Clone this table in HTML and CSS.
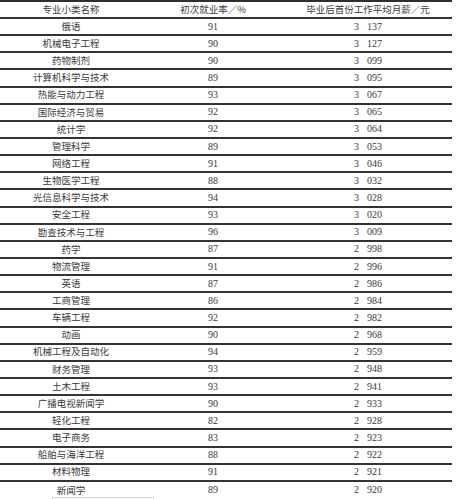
FILE: index.html
```html
<!DOCTYPE html>
<html lang="zh">
<head>
<meta charset="utf-8">
<link rel="stylesheet" href="styles.css">
</head>
<body>
<div class="page">
  <div class="table">
    <div class="row head"><span>专业小类名称</span><span>初次就业率／%</span><span>毕业后首份工作平均月薪／元</span></div>
    <div class="row"><span>俄语</span><span class="num">91</span><span class="num">3<i></i>137</span></div>
    <div class="row"><span>机械电子工程</span><span class="num">90</span><span class="num">3<i></i>127</span></div>
    <div class="row"><span>药物制剂</span><span class="num">90</span><span class="num">3<i></i>099</span></div>
    <div class="row"><span>计算机科学与技术</span><span class="num">89</span><span class="num">3<i></i>095</span></div>
    <div class="row"><span>热能与动力工程</span><span class="num">93</span><span class="num">3<i></i>067</span></div>
    <div class="row"><span>国际经济与贸易</span><span class="num">92</span><span class="num">3<i></i>065</span></div>
    <div class="row"><span>统计学</span><span class="num">92</span><span class="num">3<i></i>064</span></div>
    <div class="row"><span>管理科学</span><span class="num">89</span><span class="num">3<i></i>053</span></div>
    <div class="row"><span>网络工程</span><span class="num">91</span><span class="num">3<i></i>046</span></div>
    <div class="row"><span>生物医学工程</span><span class="num">88</span><span class="num">3<i></i>032</span></div>
    <div class="row"><span>光信息科学与技术</span><span class="num">94</span><span class="num">3<i></i>028</span></div>
    <div class="row"><span>安全工程</span><span class="num">93</span><span class="num">3<i></i>020</span></div>
    <div class="row"><span>勘查技术与工程</span><span class="num">96</span><span class="num">3<i></i>009</span></div>
    <div class="row"><span>药学</span><span class="num">87</span><span class="num">2<i></i>998</span></div>
    <div class="row"><span>物流管理</span><span class="num">91</span><span class="num">2<i></i>996</span></div>
    <div class="row"><span>英语</span><span class="num">87</span><span class="num">2<i></i>986</span></div>
    <div class="row"><span>工商管理</span><span class="num">86</span><span class="num">2<i></i>984</span></div>
    <div class="row"><span>车辆工程</span><span class="num">92</span><span class="num">2<i></i>982</span></div>
    <div class="row"><span>动画</span><span class="num">90</span><span class="num">2<i></i>968</span></div>
    <div class="row"><span>机械工程及自动化</span><span class="num">94</span><span class="num">2<i></i>959</span></div>
    <div class="row"><span>财务管理</span><span class="num">93</span><span class="num">2<i></i>948</span></div>
    <div class="row"><span>土木工程</span><span class="num">93</span><span class="num">2<i></i>941</span></div>
    <div class="row"><span>广播电视新闻学</span><span class="num">90</span><span class="num">2<i></i>933</span></div>
    <div class="row"><span>轻化工程</span><span class="num">82</span><span class="num">2<i></i>928</span></div>
    <div class="row"><span>电子商务</span><span class="num">83</span><span class="num">2<i></i>923</span></div>
    <div class="row"><span>船舶与海洋工程</span><span class="num">88</span><span class="num">2<i></i>922</span></div>
    <div class="row"><span>材料物理</span><span class="num">91</span><span class="num">2<i></i>921</span></div>
    <div class="row last"><span>新闻学</span><span class="num">89</span><span class="num">2<i></i>920</span></div>
  </div>
  <div class="tip"></div>
</div>
</body>
</html>
```
FILE: styles.css
```css
html, body {
  margin: 0;
  padding: 0;
  background: #fff;
}
.page {
  position: relative;
  width: 474px;
  height: 499px;
  overflow: hidden;
}
.table {
  width: 452px;
  border-top: 2px solid #2e2e2e;
  font-family: "Noto Sans CJK SC", sans-serif;
  font-size: 9.5px;
  color: #3a3a3a;
}
.row {
  display: grid;
  grid-template-columns: 142px 142px 168px;
  height: 17.15px;
  box-sizing: border-box;
  border-bottom: 2px solid #333;
  align-items: center;
  line-height: 1;
}
.row.head {
  height: 17px;
}
.row.last {
  border-bottom: none;
}
.row span {
  text-align: center;
}
.num {
  font-family: "Liberation Serif", serif;
  font-size: 10px;
}
.num i {
  display: inline-block;
  width: 8px;
}
.tip {
  position: absolute;
  left: 52px;
  top: 497px;
  width: 100px;
  height: 10px;
  border: 1px solid #d8d8d8;
  background: #fff;
}
```
